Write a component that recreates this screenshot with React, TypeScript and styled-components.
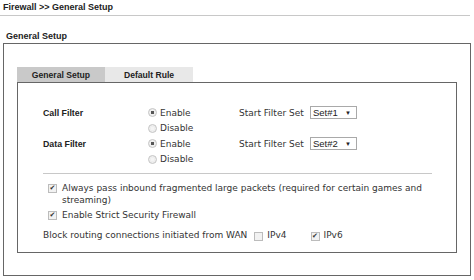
import React from "react";
import styled, { createGlobalStyle } from "styled-components";

const Global = createGlobalStyle`
    body{
        margin: 0;
        background: #ffffff;
        font-family: "DejaVu Sans", Verdana, sans-serif;
        color: #333333;
    }
`

const Page = styled.div`
    width: 474px;
    height: 280px;
    overflow: hidden;
`

const Crumb = styled.div`
    font-family: "Liberation Sans", Arial, sans-serif;
    font-weight: bold;
    font-size: 9px;
    color: #222;
    padding: 2px 0 0 3px;
    height: 13px;
    border-bottom: 1px solid #c8c8c8;
    margin-right: 4px;
    box-sizing: border-box;
    height: 16px;
`

const SectionTitle = styled.div`
    font-family: "Liberation Sans", Arial, sans-serif;
    font-weight: bold;
    font-size: 9px;
    color: #222;
    padding: 15px 0 0 6px;
    height: 12px;
`

const OuterBox = styled.div`
    margin: 0 3px 0 3px;
    width: 468px;
    height: 233px;
    border: 1px solid #666;
    padding: 23px 0 0 13px;
    box-sizing: border-box;
`

const Tabs = styled.div`
    display: flex;
    height: 15px;
`

const Tab = styled.div<{ $active?: boolean }>`
    display: flex;
    align-items: center;
    justify-content: center;
    width: 88px;
    background: ${p => p.$active ? "#c9c9c9" : "#e8e8e8"};
    font-family: "Liberation Sans", Arial, sans-serif;
    font-weight: bold;
    font-size: 8.6px;
    color: #222;
`

const InnerBox = styled.div`
    width: 440px;
    height: 171px;
    border: 1px solid #666;
    box-sizing: border-box;
    padding: 22px 0 0 25px;
`

const FilterGrid = styled.div`
    display: grid;
    grid-template-columns: 105px 91px 71px auto;
    grid-auto-rows: 15.5px;
    align-items: center;
    width: 390px;
`

const Label = styled.div`
    font-family: "Liberation Sans", Arial, sans-serif;
    font-weight: bold;
    font-size: 8.8px;
    color: #222;
`

const Option = styled.label`
    display: flex;
    align-items: center;
    gap: 3px;
    font-size: 9px;
    color: #333;
`

const Radio = styled.span<{ $on?: boolean }>`
    width: 7px;
    height: 7px;
    border-radius: 50%;
    border: 1px solid #c4c4c4;
    background: radial-gradient(circle, ${p => p.$on ? "#555 0 1.6px" : "#f4f4f4 0 1.6px"}, #eeeeee 2px);
`

const SetLabel = styled.span`
    font-size: 9px;
    color: #333;
`

const Select = styled.div`
    display: flex;
    align-items: center;
    justify-content: space-between;
    width: 47px;
    height: 13px;
    box-sizing: border-box;
    border: 1px solid #a9a9a9;
    padding: 0 5px 0 2px;
    font-family: "Liberation Sans", Arial, sans-serif;
    font-size: 9.5px;
    color: #222;

    span{
        font-size: 6px;
    }
`

const Divider = styled.div`
    width: 389px;
    border-top: 1px solid #c8c8c8;
    margin: 6px 0 0 0;
`

const CheckRow = styled.div<{ $indent?: boolean; $top: number }>`
    display: flex;
    align-items: flex-start;
    gap: 5px;
    padding-left: ${p => p.$indent ? "5px" : "0"};
    font-size: 9px;
    line-height: 12px;
    color: #333;
    margin-top: ${p => p.$top}px;
    width: 390px;
`

const Check = styled.span<{ $on?: boolean }>`
    flex: none;
    display: inline-flex;
    align-items: center;
    justify-content: center;
    width: 7px;
    height: 7px;
    margin-top: 2px;
    border: 1px solid #bcbcbc;
    background: #f2f2f2;
    font-size: 7px;
    line-height: 7px;
    color: #333;
`

const Inline = styled.span<{ $gap: number }>`
    display: inline-flex;
    align-items: center;
    gap: 4px;
    margin-left: ${p => p.$gap}px;
`

export default function App() {
    return (
        <Page>
            <Global />
            <Crumb>Firewall &gt;&gt; General Setup</Crumb>
            <SectionTitle>General Setup</SectionTitle>
            <OuterBox>
                <Tabs>
                    <Tab $active>General Setup</Tab>
                    <Tab>Default Rule</Tab>
                </Tabs>
                <InnerBox>
                    <FilterGrid>
                        <Label>Call Filter</Label>
                        <Option><Radio $on />Enable</Option>
                        <SetLabel>Start Filter Set</SetLabel>
                        <Select>Set#1<span>▼</span></Select>
                        <div />
                        <Option><Radio />Disable</Option>
                        <div />
                        <div />
                        <Label>Data Filter</Label>
                        <Option><Radio $on />Enable</Option>
                        <SetLabel>Start Filter Set</SetLabel>
                        <Select>Set#2<span>▼</span></Select>
                        <div />
                        <Option><Radio />Disable</Option>
                        <div />
                        <div />
                    </FilterGrid>
                    <Divider />
                    <CheckRow $indent $top={8}>
                        <Check $on>✔</Check>
                        <span>Always pass inbound fragmented large packets (required for certain games and streaming)</span>
                    </CheckRow>
                    <CheckRow $indent $top={3}>
                        <Check $on>✔</Check>
                        <span>Enable Strict Security Firewall</span>
                    </CheckRow>
                    <CheckRow $top={8}>
                        <span>Block routing connections initiated from WAN</span>
                        <Inline $gap={2}><Check />IPv4</Inline>
                        <Inline $gap={19}><Check $on>✔</Check>IPv6</Inline>
                    </CheckRow>
                </InnerBox>
            </OuterBox>
        </Page>
    );
}
